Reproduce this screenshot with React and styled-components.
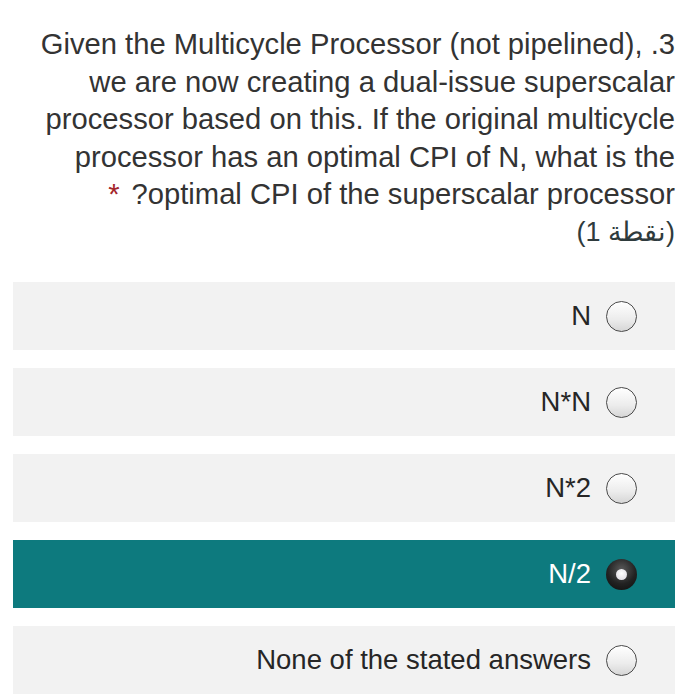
import React from 'react';
import styled, { createGlobalStyle } from 'styled-components';

const GlobalStyle = createGlobalStyle`
  html, body {
    margin: 0;
    padding: 0;
    background: #ffffff;
  }
  body {
    font-family: 'Liberation Sans', Arial, 'Noto Sans', sans-serif;
    color: #333333;
    overflow: hidden;
  }
`;

const Page = styled.div`
  width: 700px;
  height: 695px;
  padding: 26px 25px 0 13px;
  box-sizing: border-box;
`;

const Question = styled.div`
  font-size: 29.2px;
  line-height: 37.5px;
  text-align: right;
  color: #333333;
  margin-bottom: 31px;
`;

const Line = styled.div`
  white-space: nowrap;
`;

const Required = styled.span`
  color: #a4262c;
  margin-right: 12px;
`;

const Points = styled.div`
  display: flex;
  justify-content: flex-end;
  white-space: pre;
  font-size: 27px;
  color: #2f3b3d;
`;

const Options = styled.div`
  display: flex;
  flex-direction: column;
  gap: 18px;
`;

const Option = styled.div`
  height: 68px;
  display: flex;
  align-items: center;
  justify-content: flex-end;
  gap: 15px;
  padding-right: 38px;
  background: ${(p) => (p.selected ? '#0d7a7e' : '#f2f2f2')};
  color: ${(p) => (p.selected ? '#ffffff' : '#262626')};
  font-size: 27.5px;
`;

const Radio = styled.span`
  width: 31px;
  height: 31px;
  box-sizing: border-box;
  border-radius: 50%;
  flex: none;
  display: flex;
  align-items: center;
  justify-content: center;
  border: ${(p) => (p.checked ? 'none' : '1.5px solid #4a4a4a')};
  background: ${(p) =>
    p.checked
      ? 'radial-gradient(circle at 50% 35%, #5a5a5a 0%, #222 55%, #0c0c0c 100%)'
      : 'linear-gradient(to bottom, #ffffff 0%, #ececec 60%, #d6d6d6 100%)'};
  &::after {
    content: '';
    display: ${(p) => (p.checked ? 'block' : 'none')};
    width: 11px;
    height: 11px;
    border-radius: 50%;
    background: radial-gradient(circle at 50% 40%, #ffffff 0%, #d8d4dc 100%);
  }
`;

const answers = ['N', 'N*N', 'N*2', 'N/2', 'None of the stated answers'];

export default function App() {
  return (
    <Page>
      <GlobalStyle />
      <Question>
        <Line>Given the Multicycle Processor (not pipelined), .3</Line>
        <Line>we are now creating a dual-issue superscalar</Line>
        <Line>processor based on this. If the original multicycle</Line>
        <Line>processor has an optimal CPI of N, what is the</Line>
        <Line>
          <Required>*</Required>?optimal CPI of the superscalar processor
        </Line>
        <Points>
          <span>(</span>
          <span>1 </span>
          <span>نقطة</span>
          <span>)</span>
        </Points>
      </Question>
      <Options>
        {answers.map((a) => (
          <Option key={a} selected={a === 'N/2'}>
            <span>{a}</span>
            <Radio checked={a === 'N/2'} />
          </Option>
        ))}
      </Options>
    </Page>
  );
}
